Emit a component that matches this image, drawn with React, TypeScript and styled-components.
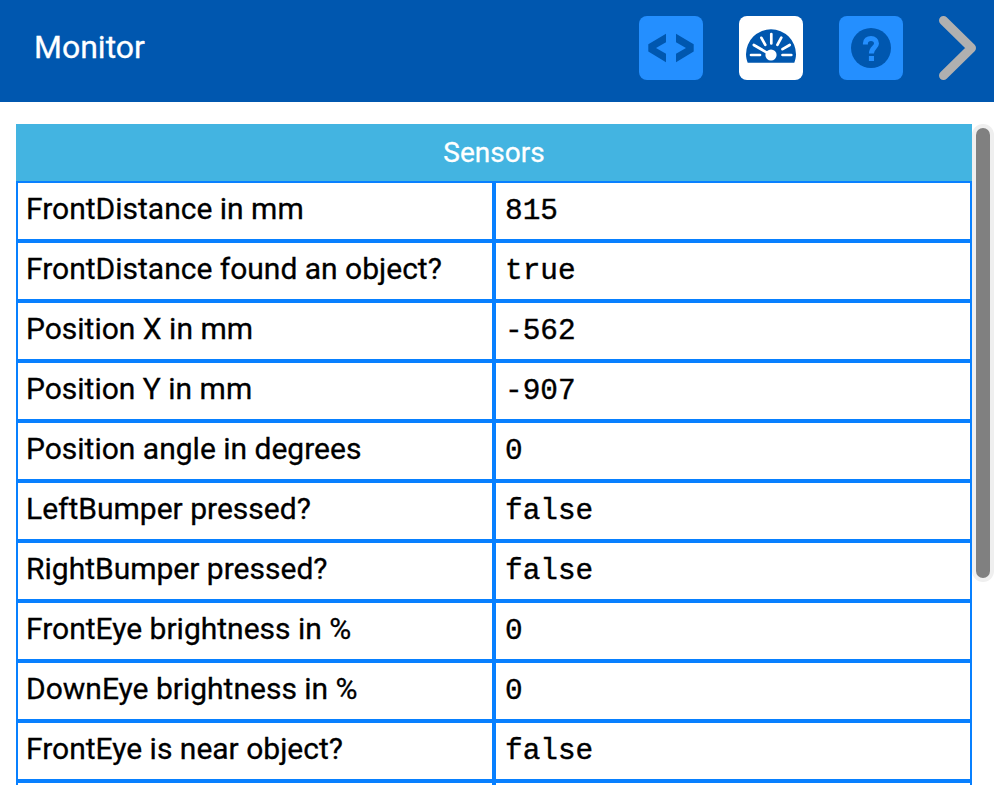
import React from "react";
import styled, { createGlobalStyle } from "styled-components";

const Global = createGlobalStyle`
  * { box-sizing: border-box; }
  body { margin: 0; background: #fff; overflow: hidden; }
`;

const Page = styled.div`
  width: 994px;
  height: 798px;
  overflow: hidden;
  background: #fff;
  color: #000;
  font-family: Roboto, sans-serif;
  -webkit-text-stroke: 0.3px currentColor;
`;

const Header = styled.header`
  display: flex;
  align-items: flex-start;
  height: 102px;
  padding: 16px 17px 0 34px;
  background: #0057af;
`;

const Title = styled.h1`
  margin: 0;
  flex: 1;
  color: #fff;
  font-size: 32px;
  font-weight: 400;
  line-height: 62px;
`;

const Tools = styled.nav`
  display: flex;
  gap: 36px;
`;

const ToolButton = styled.button<{ $active?: boolean }>`
  display: block;
  width: 64px;
  height: 64px;
  padding: 0;
  border: 0;
  border-radius: 8px;
  background: ${(p) => (p.$active ? "#fff" : "#248fff")};
  color: #0057af;
`;

const NextButton = styled.button`
  width: 38px;
  height: 64px;
  padding: 0;
  border: 0;
  background: none;
  color: #b0b0b0;
`;

const Icon = styled.svg`
  display: block;
`;

const Content = styled.main`
  display: flex;
  align-items: flex-start;
  height: 683px;
  padding: 22px 0 0 16px;
  overflow: hidden;
`;

const Table = styled.section`
  width: 956px;
`;

const TableHeading = styled.h2`
  margin: 0;
  height: 57px;
  background: #43b4e1;
  color: #fff;
  font-size: 28px;
  font-weight: 400;
  line-height: 57px;
  text-align: center;
`;

const Row = styled.div`
  display: grid;
  grid-template-columns: 1fr 1fr;
  height: 60px;
`;

const Cell = styled.div`
  height: 60px;
  border: 2px solid #0880ff;
  padding-left: 8px;
  font-size: 30px;
  line-height: 51px;
  white-space: nowrap;
`;

const ValueCell = styled(Cell)`
  padding: 2px 0 0 9px;
  font-family: "Liberation Mono", monospace;
  font-size: 29.4px;
  line-height: 54px;
  -webkit-text-stroke-width: 0.4px;
`;

const ScrollTrack = styled.div`
  width: 22px;
  height: 458px;
  padding: 4px;
  border-radius: 11px;
  background: #efefef;
`;

const ScrollThumb = styled.div`
  width: 14px;
  height: 450px;
  border-radius: 7px;
  background: #808080;
`;

const rows = [
  ["FrontDistance in mm", "815"],
  ["FrontDistance found an object?", "true"],
  ["Position X in mm", "-562"],
  ["Position Y in mm", "-907"],
  ["Position angle in degrees", "0"],
  ["LeftBumper pressed?", "false"],
  ["RightBumper pressed?", "false"],
  ["FrontEye brightness in %", "0"],
  ["DownEye brightness in %", "0"],
  ["FrontEye is near object?", "false"],
  ["", ""],
];

const CodeIcon = () => (
  <Icon width="64" height="64" viewBox="0 0 64 64" fill="currentColor">
    <path d="M27 17.7V26.3L17 32L27 37.7V46.2L9.3 35.5V28.3Z" />
    <path d="M37 17.7V26.3L47 32L37 37.7V46.2L54.7 35.5V28.3Z" />
  </Icon>
);

const GaugeIcon = () => (
  <Icon width="64" height="64" viewBox="0 0 64 64">
    <path d="M8.7 46.7C7.8 44 7 41.5 7 38.3A25 25 0 0 1 57 38.3C57 41.5 56.2 44 55.3 46.7Z" fill="currentColor" />
    <path d="M12 39H21M22.4 21.8L26.3 28.9M32.3 18V27.5M42.3 21.6L38.4 28.9M50.7 29L43.5 33.2M43.5 39H52.3M14.8 29L30 37.8" stroke="#fff" strokeWidth="2.7" strokeLinecap="round" fill="none" />
    <circle cx="32" cy="39" r="5.6" fill="#fff" />
  </Icon>
);

const HelpIcon = () => (
  <Icon width="64" height="64" viewBox="0 0 64 64">
    <circle cx="32" cy="32" r="20" fill="currentColor" />
    <path d="M26.4 28.6V27.6C26.4 24.2 28.8 22.5 32 22.5S37.5 24.3 37.5 27.5C37.5 31.4 32.4 31.8 32.4 37.4" stroke="#248fff" strokeWidth="5" fill="none" />
    <path d="M29.9 40H35V45H29.9Z" fill="#248fff" />
  </Icon>
);

const ChevronIcon = () => (
  <Icon width="38" height="64" viewBox="0 0 38 64">
    <path d="M4.5 4.5L32.5 32L4.5 59.5" fill="none" stroke="currentColor" strokeWidth="9" strokeLinecap="round" strokeLinejoin="round" />
  </Icon>
);

export default function App() {
  return (
    <>
      <Global />
      <Page>
        <Header>
          <Title>Monitor</Title>
          <Tools>
            <ToolButton aria-label="Code"><CodeIcon /></ToolButton>
            <ToolButton $active aria-label="Monitor"><GaugeIcon /></ToolButton>
            <ToolButton aria-label="Help"><HelpIcon /></ToolButton>
            <NextButton aria-label="Next"><ChevronIcon /></NextButton>
          </Tools>
        </Header>
        <Content>
          <Table>
            <TableHeading>Sensors</TableHeading>
            {rows.map(([label, value], i) => (
              <Row key={i}>
                <Cell>{label}</Cell>
                <ValueCell>{value}</ValueCell>
              </Row>
            ))}
          </Table>
          <ScrollTrack>
            <ScrollThumb />
          </ScrollTrack>
        </Content>
      </Page>
    </>
  );
}
